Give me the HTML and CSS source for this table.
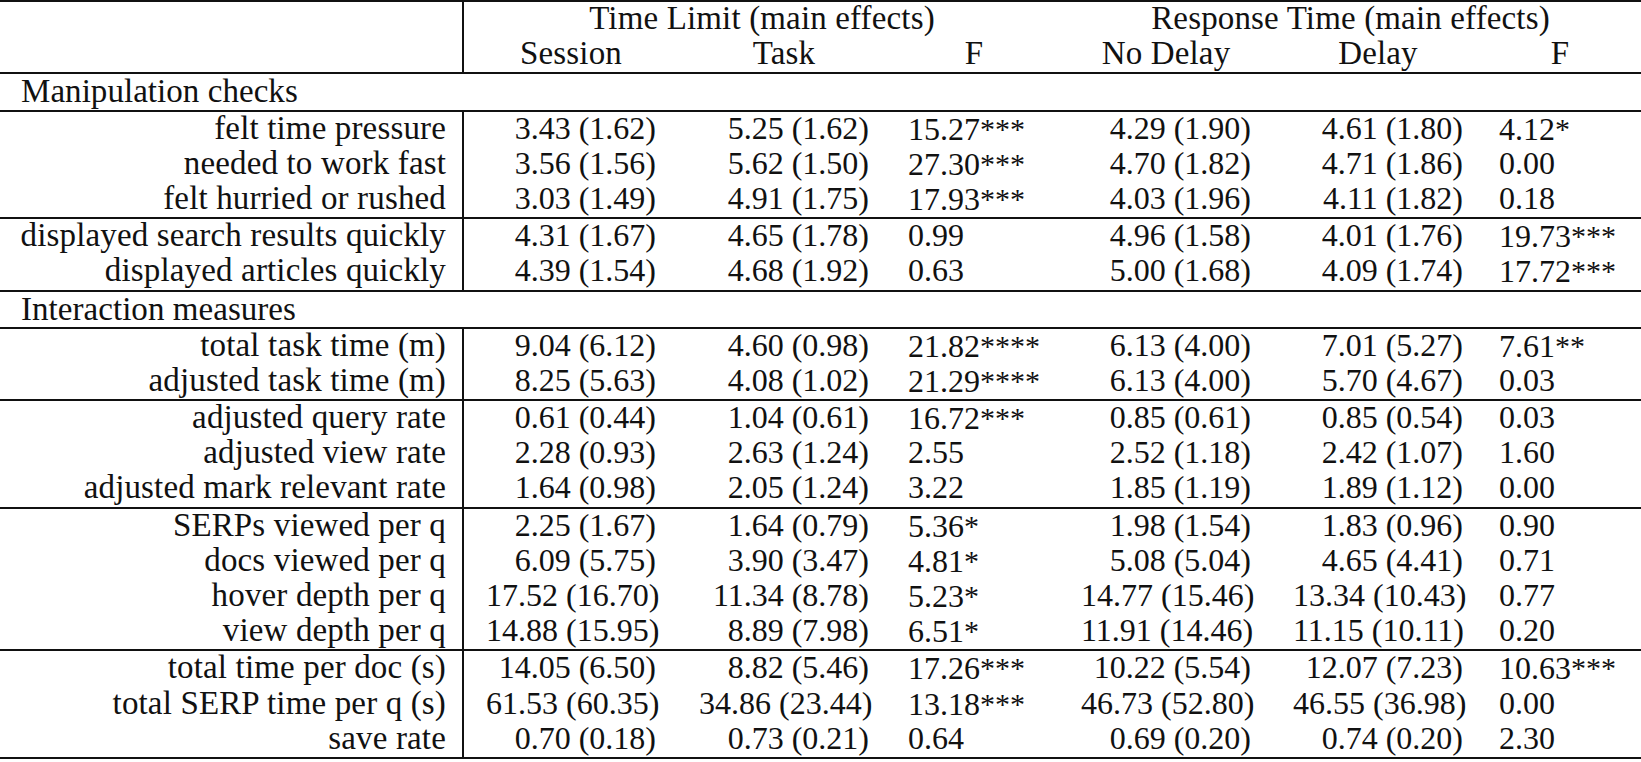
FILE: index.html
```html
<!DOCTYPE html>
<html lang="en">
<head>
<meta charset="utf-8">
<title>Time Limit and Response Time main effects</title>
<link rel="stylesheet" href="styles.css">
</head>
<body>
<div class="tbl">
  <div class="rule"></div>
  <div class="row head">
    <div class="lab"></div>
    <div class="span1 txt">Time Limit (main effects)</div>
    <div class="span2 txt">Response Time (main effects)</div>
  </div>
  <div class="row head">
    <div class="lab"></div>
    <div class="c1 txt">Session</div>
    <div class="c2 txt">Task</div>
    <div class="c3 txt">F</div>
    <div class="c4 txt">No Delay</div>
    <div class="c5 txt">Delay</div>
    <div class="c6 txt">F</div>
  </div>
  <div class="rule"></div>
  <div class="section">Manipulation checks</div>
  <div class="rule"></div>

  <div class="row"><div class="lab">felt time pressure</div><div class="c1">3.43 (1.62)</div><div class="c2">5.25 (1.62)</div><div class="c3">15.27<span class="st">***</span></div><div class="c4">4.29 (1.90)</div><div class="c5">4.61 (1.80)</div><div class="c6">4.12<span class="st">*</span></div></div>
  <div class="row"><div class="lab">needed to work fast</div><div class="c1">3.56 (1.56)</div><div class="c2">5.62 (1.50)</div><div class="c3">27.30<span class="st">***</span></div><div class="c4">4.70 (1.82)</div><div class="c5">4.71 (1.86)</div><div class="c6">0.00</div></div>
  <div class="row"><div class="lab">felt hurried or rushed</div><div class="c1">3.03 (1.49)</div><div class="c2">4.91 (1.75)</div><div class="c3">17.93<span class="st">***</span></div><div class="c4">4.03 (1.96)</div><div class="c5">4.11 (1.82)</div><div class="c6">0.18</div></div>
  <div class="rule"></div>
  <div class="row"><div class="lab">displayed search results quickly</div><div class="c1">4.31 (1.67)</div><div class="c2">4.65 (1.78)</div><div class="c3">0.99</div><div class="c4">4.96 (1.58)</div><div class="c5">4.01 (1.76)</div><div class="c6">19.73<span class="st">***</span></div></div>
  <div class="row"><div class="lab">displayed articles quickly</div><div class="c1">4.39 (1.54)</div><div class="c2">4.68 (1.92)</div><div class="c3">0.63</div><div class="c4">5.00 (1.68)</div><div class="c5">4.09 (1.74)</div><div class="c6">17.72<span class="st">***</span></div></div>
  <div class="rule"></div>
  <div class="section">Interaction measures</div>
  <div class="rule"></div>

  <div class="row"><div class="lab">total task time (m)</div><div class="c1">9.04 (6.12)</div><div class="c2">4.60 (0.98)</div><div class="c3">21.82<span class="st">****</span></div><div class="c4">6.13 (4.00)</div><div class="c5">7.01 (5.27)</div><div class="c6">7.61<span class="st">**</span></div></div>
  <div class="row"><div class="lab">adjusted task time (m)</div><div class="c1">8.25 (5.63)</div><div class="c2">4.08 (1.02)</div><div class="c3">21.29<span class="st">****</span></div><div class="c4">6.13 (4.00)</div><div class="c5">5.70 (4.67)</div><div class="c6">0.03</div></div>
  <div class="rule"></div>
  <div class="row"><div class="lab">adjusted query rate</div><div class="c1">0.61 (0.44)</div><div class="c2">1.04 (0.61)</div><div class="c3">16.72<span class="st">***</span></div><div class="c4">0.85 (0.61)</div><div class="c5">0.85 (0.54)</div><div class="c6">0.03</div></div>
  <div class="row"><div class="lab">adjusted view rate</div><div class="c1">2.28 (0.93)</div><div class="c2">2.63 (1.24)</div><div class="c3">2.55</div><div class="c4">2.52 (1.18)</div><div class="c5">2.42 (1.07)</div><div class="c6">1.60</div></div>
  <div class="row"><div class="lab">adjusted mark relevant rate</div><div class="c1">1.64 (0.98)</div><div class="c2">2.05 (1.24)</div><div class="c3">3.22</div><div class="c4">1.85 (1.19)</div><div class="c5">1.89 (1.12)</div><div class="c6">0.00</div></div>
  <div class="rule"></div>
  <div class="row"><div class="lab">SERPs viewed per q</div><div class="c1">2.25 (1.67)</div><div class="c2">1.64 (0.79)</div><div class="c3">5.36<span class="st">*</span></div><div class="c4">1.98 (1.54)</div><div class="c5">1.83 (0.96)</div><div class="c6">0.90</div></div>
  <div class="row"><div class="lab">docs viewed per q</div><div class="c1">6.09 (5.75)</div><div class="c2">3.90 (3.47)</div><div class="c3">4.81<span class="st">*</span></div><div class="c4">5.08 (5.04)</div><div class="c5">4.65 (4.41)</div><div class="c6">0.71</div></div>
  <div class="row"><div class="lab">hover depth per q</div><div class="c1">17.52 (16.70)</div><div class="c2">11.34 (8.78)</div><div class="c3">5.23<span class="st">*</span></div><div class="c4">14.77 (15.46)</div><div class="c5">13.34 (10.43)</div><div class="c6">0.77</div></div>
  <div class="row"><div class="lab">view depth per q</div><div class="c1">14.88 (15.95)</div><div class="c2">8.89 (7.98)</div><div class="c3">6.51<span class="st">*</span></div><div class="c4">11.91 (14.46)</div><div class="c5">11.15 (10.11)</div><div class="c6">0.20</div></div>
  <div class="rule"></div>
  <div class="row"><div class="lab">total time per doc (s)</div><div class="c1">14.05 (6.50)</div><div class="c2">8.82 (5.46)</div><div class="c3">17.26<span class="st">***</span></div><div class="c4">10.22 (5.54)</div><div class="c5">12.07 (7.23)</div><div class="c6">10.63<span class="st">***</span></div></div>
  <div class="row"><div class="lab">total SERP time per q (s)</div><div class="c1">61.53 (60.35)</div><div class="c2">34.86 (23.44)</div><div class="c3">13.18<span class="st">***</span></div><div class="c4">46.73 (52.80)</div><div class="c5">46.55 (36.98)</div><div class="c6">0.00</div></div>
  <div class="row"><div class="lab">save rate</div><div class="c1">0.70 (0.18)</div><div class="c2">0.73 (0.21)</div><div class="c3">0.64</div><div class="c4">0.69 (0.20)</div><div class="c5">0.74 (0.20)</div><div class="c6">2.30</div></div>
  <div class="rule"></div>
</div>
</body>
</html>
```

FILE: styles.css
```css
html, body {
  margin: 0;
  padding: 0;
  background: #ffffff;
}

body {
  color: #111111;
  font-family: "Liberation Serif", "Times New Roman", serif;
}

.tbl {
  width: 1641px;
}

.rule {
  height: 2px;
  background: #111111;
}

.row {
  display: grid;
  grid-template-columns: 464px 213px 212px 171px 212px 211px 158px;
  height: 35.2px;
  line-height: 33px;
  font-size: 32px;
  white-space: nowrap;
}

.lab,
.txt {
  font-size: 33px;
  letter-spacing: 0.15px;
}

.lab {
  box-sizing: border-box;
  border-right: 2px solid #111111;
  text-align: right;
  padding-right: 16px;
}

.c1 { padding: 0 21px 0 22px; text-align: right; }
.c2 { padding: 0 20px 0 22px; text-align: right; }
.c3 { padding: 0 20px 0 19px; text-align: left; }
.c4 { padding: 0 21px 0 21px; text-align: right; }
.c5 { padding: 0 20px 0 21px; text-align: right; }
.c6 { padding: 0 20px 0 16px; text-align: left; }

.head .c1,
.head .c2,
.head .c3,
.head .c4,
.head .c5,
.head .c6 {
  text-align: center;
}

.span1 {
  grid-column: 2 / 5;
  text-align: center;
}

.span2 {
  grid-column: 5 / 8;
  text-align: center;
}

.section {
  height: 35.2px;
  line-height: 34px;
  padding-left: 21px;
  font-size: 33px;
  letter-spacing: 0.05px;
  white-space: nowrap;
}

.st {
  font-size: 30px;
  letter-spacing: 0;
  vertical-align: 1px;
}
```
